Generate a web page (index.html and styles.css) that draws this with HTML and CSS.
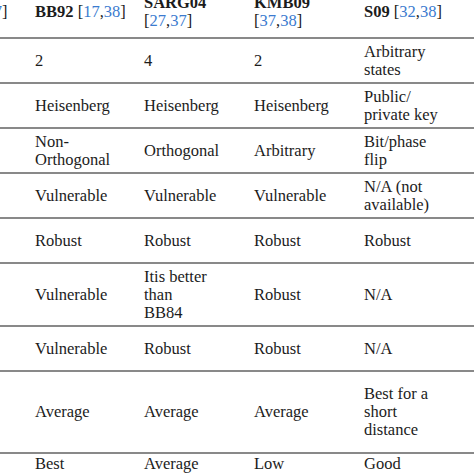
FILE: index.html
```html
<!DOCTYPE html>
<html>
<head>
<meta charset="utf-8">
<link rel="stylesheet" href="styles.css">
</head>
<body>
<div class="frame">
<table class="cmp">
  <colgroup>
    <col class="c0"><col class="c1"><col class="c2"><col class="c3"><col class="c4">
  </colgroup>
  <thead>
    <tr>
      <th><b>BB84</b> [<span class="ref">1</span>,<span class="ref">37</span>]</th>
      <th><b>BB92</b> [<span class="ref">17</span>,<span class="ref">38</span>]</th>
      <th><b>SARG04</b><br>[<span class="ref">27</span>,<span class="ref">37</span>]</th>
      <th><b>KMB09</b><br>[<span class="ref">37</span>,<span class="ref">38</span>]</th>
      <th><b>S09</b> [<span class="ref">32</span>,<span class="ref">38</span>]</th>
    </tr>
  </thead>
  <tbody>
    <tr><td></td><td>2</td><td>4</td><td>2</td><td>Arbitrary<br>states</td></tr>
    <tr><td></td><td>Heisenberg</td><td>Heisenberg</td><td>Heisenberg</td><td>Public/<br>private key</td></tr>
    <tr><td></td><td>Non-<br>Orthogonal</td><td>Orthogonal</td><td>Arbitrary</td><td>Bit/phase<br>flip</td></tr>
    <tr><td></td><td>Vulnerable</td><td>Vulnerable</td><td>Vulnerable</td><td>N/A (not<br>available)</td></tr>
    <tr><td></td><td>Robust</td><td>Robust</td><td>Robust</td><td>Robust</td></tr>
    <tr class="r63"><td></td><td>Vulnerable</td><td>Itis better<br>than<br>BB84</td><td>Robust</td><td>N/A</td></tr>
    <tr><td></td><td>Vulnerable</td><td>Robust</td><td>Robust</td><td>N/A</td></tr>
    <tr class="r82"><td></td><td>Average</td><td>Average</td><td>Average</td><td>Best for a<br>short<br>distance</td></tr>
    <tr class="last"><td></td><td>Best</td><td>Average</td><td>Low</td><td>Good</td></tr>
  </tbody>
</table>
</div>
</body>
</html>
```

FILE: styles.css
```css
html, body {
  margin: 0;
  padding: 0;
  background: #ffffff;
}

.frame {
  width: 474px;
  height: 474px;
  overflow: hidden;
}

.cmp {
  margin-top: -11px;
  margin-left: -75px;
  width: 549px;
  table-layout: fixed;
  border-collapse: separate;
  border-spacing: 0;
  font-family: "Liberation Serif", "Times New Roman", serif;
  font-size: 16.5px;
  line-height: 18px;
  color: #1c1c1c;
}

.c0 { width: 110px; }
.c1 { width: 109px; }
.c2 { width: 110px; }
.c3 { width: 110px; }
.c4 { width: 110px; }

.cmp th,
.cmp td {
  box-sizing: border-box;
  padding: 0 4px 0 0;
  text-align: left;
  vertical-align: middle;
  white-space: nowrap;
  border-bottom: 2px solid #898989;
  height: 45px;
}

.cmp th {
  font-weight: normal;
  height: 50px;
  padding-bottom: 3px;
}

.cmp th b {
  font-weight: bold;
}

.ref {
  color: #3b7bcf;
}

.r63 td { height: 63px; }
.r82 td { height: 82px; }

.last td {
  vertical-align: top;
  padding-top: 1px;
  border-bottom: none;
}
```
